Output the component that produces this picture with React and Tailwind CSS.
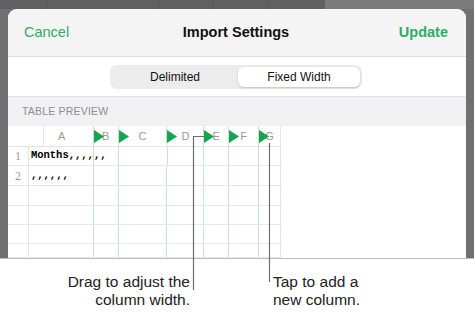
import React from 'react';

const cols = [
    { letter: 'A', w: 64 },
    { letter: 'B', w: 25 },
    { letter: 'C', w: 49 },
    { letter: 'D', w: 37 },
    { letter: 'E', w: 25 },
    { letter: 'F', w: 30 },
    { letter: 'G', w: 22 },
];

const rows = [
    { n: '1', text: 'Months,,,,,,', h: 19 },
    { n: '2', text: ',,,,,,', h: 20 },
    { n: '', text: '', h: 20 },
    { n: '', text: '', h: 19 },
    { n: '', text: '', h: 19 },
    { n: '', text: '', h: 14 },
];

function Marker() {
    return (
        <svg width="10" height="13" viewBox="0 0 10 13" className="absolute left-0 top-[4px]">
            <path d="M0 0 L10 6.5 L0 13 Z" fill="#17a34f" />
        </svg>
    );
}

function TablePreview() {
    return (
        <div className="w-[273px] text-[11px]">
            {/* column header row */}
            <div className="flex h-[21px] border-b border-[#e4e4e4]">
                <div className="w-[36px] border-r border-[#e4e4e4]" />
                <div className="w-[49px] flex items-center justify-center pr-[13px] text-[#9a9a9a]">A</div>
                {cols.slice(1).map(c => (
                    <div
                        key={c.letter}
                        className="relative flex items-center justify-center border-l border-[#c6e4d3] text-[#9a9a9a]"
                        style={{ width: c.w }}
                    >
                        <span>{c.letter}</span>
                        <Marker />
                    </div>
                ))}
                <div className="border-l border-[#e4e4e4]" />
            </div>
            {/* data rows */}
            {rows.map((r, i) => (
                <div key={i} className="flex border-b border-[#e8e8e8]" style={{ height: r.h }}>
                    <div className="w-[21px] flex items-center justify-center border-r border-[#e4e4e4] text-[12px] text-[#9a9a9a] font-['Liberation_Serif',serif]">
                        {r.n}
                    </div>
                    <div className="w-[64px] flex items-center pl-[2px] overflow-visible whitespace-nowrap">
                        <span className="font-['Liberation_Mono',monospace] font-bold text-[10.5px] text-black relative z-10">{r.text}</span>
                    </div>
                    {cols.slice(1).map(c => (
                        <div key={c.letter} className="border-l border-[#c6e4d3]" style={{ width: c.w }} />
                    ))}
                    <div className="border-l border-[#e4e4e4]" />
                </div>
            ))}
        </div>
    );
}

export default function App() {
    return (
        <div className="relative w-[474px] h-[312px] overflow-hidden bg-white font-['Liberation_Sans',sans-serif]">
            {/* backdrop + sheet */}
            <div className="h-[259px] bg-[#707072] border-b border-[#bdbdbd] flex flex-col">
                <div className="h-[9px] flex shrink-0">
                    <div className="w-[325px] bg-[#5f6062] flex">
                        <div className="w-[48px] border-r border-[#58595b]" />
                        <div className="w-[112px] border-r border-[#58595b]" />
                        <div className="w-[54px] border-r border-[#58595b]" />
                        <div className="w-[55px] border-r border-[#58595b]" />
                    </div>
                    <div className="flex-1 bg-[#7b7b7d]" />
                </div>
                <div className="flex-1 flex px-[8px]">
                    <div className="flex-1 bg-white rounded-t-[9px] overflow-hidden flex flex-col">
                        {/* header */}
                        <div className="h-[48px] shrink-0 bg-[#f4f4f5] border-b border-[#dddddd] grid grid-cols-[1fr_auto_1fr] items-center pl-[16px] pr-[18px] text-[14.5px]">
                            <span className="text-[#2aae63]">Cancel</span>
                            <span className="text-[#111] font-semibold">Import Settings</span>
                            <span className="text-[#2aae63] font-semibold text-right">Update</span>
                        </div>
                        {/* segmented control */}
                        <div className="h-[40px] shrink-0 flex items-center justify-center border-b border-[#e2e2e2] pr-[2px]">
                            <div className="flex bg-[#ececee] rounded-[7px] p-[2px] text-[12px] text-[#111]">
                                <div className="w-[126px] h-[20px] flex items-center justify-center">Delimited</div>
                                <div className="w-[122px] h-[20px] flex items-center justify-center bg-white rounded-[6px] shadow-[0_1px_2px_rgba(0,0,0,0.18)]">Fixed Width</div>
                            </div>
                        </div>
                        {/* section label */}
                        <div className="h-[29px] shrink-0 bg-[#f1f1f4] flex items-center pl-[14px] text-[10.5px] text-[#8e8e93] tracking-[0.2px]">
                            TABLE PREVIEW
                        </div>
                        <TablePreview />
                    </div>
                </div>
            </div>

            {/* callouts */}
            <div className="flex pt-[14px] text-[15.5px] leading-[18px] text-[#222]">
                <div className="w-[190px] text-right">
                    Drag to adjust the<br />column width.
                </div>
                <div className="ml-[83px]">
                    Tap to add a<br />new column.
                </div>
            </div>

            {/* leader lines */}
            <svg className="absolute inset-0 pointer-events-none" width="474" height="312">
                <path d="M204 136.5 H193.5 V290" fill="none" stroke="#6e6e6e" strokeWidth="1.2" />
                <path d="M269.5 143 V282" fill="none" stroke="#6e6e6e" strokeWidth="1.2" />
            </svg>
        </div>
    );
}
